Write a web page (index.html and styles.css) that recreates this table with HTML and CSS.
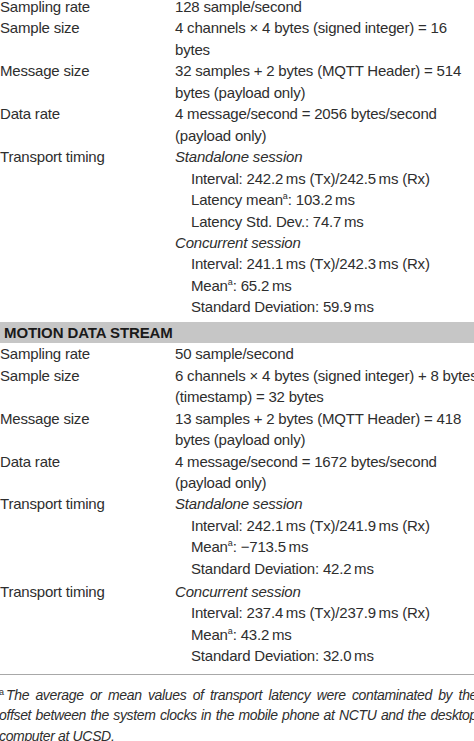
FILE: index.html
```html
<!DOCTYPE html>
<html>
<head>
<meta charset="utf-8">
<link rel="stylesheet" href="styles.css">
</head>
<body>
<div class="table">
  <div class="row"><div class="label">Sampling rate</div><div class="value">128 sample/second</div></div>
  <div class="row"><div class="label">Sample size</div><div class="value">4 channels × 4 bytes (signed integer) = 16 bytes</div></div>
  <div class="row"><div class="label">Message size</div><div class="value">32 samples + 2 bytes (MQTT Header) = 514 bytes (payload only)</div></div>
  <div class="row"><div class="label">Data rate</div><div class="value">4 message/second = 2056 bytes/second (payload only)</div></div>
  <div class="row"><div class="label">Transport timing</div><div class="value">
    <div class="sess">Standalone session</div>
    <div class="sub">Interval: 242.2&thinsp;ms (Tx)/242.5&thinsp;ms (Rx)</div>
    <div class="sub">Latency mean<sup>a</sup>: 103.2&thinsp;ms</div>
    <div class="sub">Latency Std. Dev.: 74.7&thinsp;ms</div>
    <div class="sess">Concurrent session</div>
    <div class="sub">Interval: 241.1&thinsp;ms (Tx)/242.3&thinsp;ms (Rx)</div>
    <div class="sub">Mean<sup>a</sup>: 65.2&thinsp;ms</div>
    <div class="sub">Standard Deviation: 59.9&thinsp;ms</div>
  </div></div>
  <div class="band">MOTION DATA STREAM</div>
  <div class="row"><div class="label">Sampling rate</div><div class="value">50 sample/second</div></div>
  <div class="row"><div class="label">Sample size</div><div class="value nowrap">6 channels × 4 bytes (signed integer) + 8 bytes<br>(timestamp) = 32 bytes</div></div>
  <div class="row"><div class="label">Message size</div><div class="value">13 samples + 2 bytes (MQTT Header) = 418 bytes (payload only)</div></div>
  <div class="row"><div class="label">Data rate</div><div class="value">4 message/second = 1672 bytes/second (payload only)</div></div>
  <div class="row"><div class="label">Transport timing</div><div class="value">
    <div class="sess">Standalone session</div>
    <div class="sub">Interval: 242.1&thinsp;ms (Tx)/241.9&thinsp;ms (Rx)</div>
    <div class="sub">Mean<sup>a</sup>: −713.5&thinsp;ms</div>
    <div class="sub">Standard Deviation: 42.2&thinsp;ms</div>
  </div></div>
  <div class="row gap"><div class="label">Transport timing</div><div class="value">
    <div class="sess">Concurrent session</div>
    <div class="sub">Interval: 237.4&thinsp;ms (Tx)/237.9&thinsp;ms (Rx)</div>
    <div class="sub">Mean<sup>a</sup>: 43.2&thinsp;ms</div>
    <div class="sub">Standard Deviation: 32.0&thinsp;ms</div>
  </div></div>
</div>
<div class="foot"><sup>a</sup>The average or mean values of transport latency were contaminated by the offset between the system clocks in the mobile phone at NCTU and the desktop computer at UCSD.</div>
</body>
</html>
```
FILE: styles.css
```css
html, body {
  margin: 0;
  padding: 0;
  background: #ffffff;
  overflow: hidden;
}
body {
  font-family: "Liberation Sans", Arial, sans-serif;
  font-size: 15px;
  letter-spacing: -0.2px;
  color: #2e2e2e;
  width: 474px;
}
.table {
  margin-top: -4px;
}
.row {
  display: grid;
  grid-template-columns: 175px 1fr;
  line-height: 21.45px;
}
.row.gap {
  margin-top: 1.5px;
}
.label {
  white-space: nowrap;
}
.value.nowrap {
  white-space: nowrap;
}
.sess {
  font-style: italic;
}
.sub {
  padding-left: 16px;
}
sup {
  font-size: 9px;
  line-height: 0;
  vertical-align: 6px;
  letter-spacing: 0;
}
.band {
  background: #c6c6c6;
  color: #1a1a1a;
  font-weight: bold;
  letter-spacing: -0.1px;
  padding-left: 4px;
  line-height: 21.5px;
  margin-top: 4px;
}
.foot {
  border-top: 1px solid #a8a8a8;
  margin-top: 7px;
  padding-top: 10px;
  font-style: italic;
  font-size: 14px;
  letter-spacing: -0.35px;
  line-height: 20.5px;
  text-align: justify;
  margin-left: -1px;
  width: 478px;
}
.foot sup {
  font-style: normal;
  font-size: 9px;
  vertical-align: 5px;
  margin-right: 2px;
}
```
